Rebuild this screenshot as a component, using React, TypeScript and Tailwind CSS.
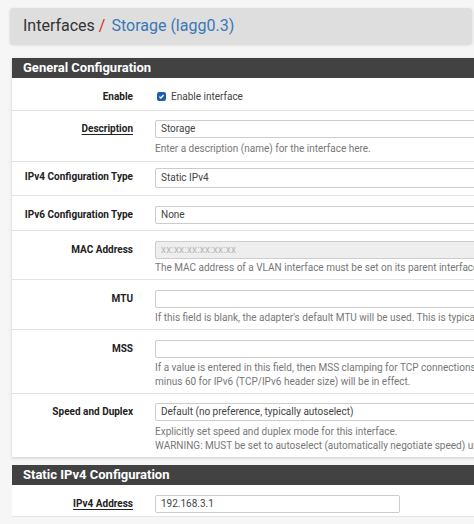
import React from 'react';

type RowProps = {
    label: string;
    underline?: boolean;
    pad: string;
    border?: boolean;
    children: React.ReactNode;
};

function Row({ label, underline, pad, border = true, children }: RowProps) {
    return (
        <div className={`flex ${border ? 'border-b border-[#e4e4e4]' : ''} ${pad}`}>
            <div className="w-[121px] shrink-0 text-right text-[10px] font-bold leading-[18px] text-[#222]">
                <span className={underline ? 'underline underline-offset-2' : ''}>{label}</span>
            </div>
            <div className="ml-[22px] flex-1">{children}</div>
        </div>
    );
}

function Input({ value, h = 'h-[18px]', disabled }: { value: string; h?: string; disabled?: boolean }) {
    return (
        <div
            className={`flex w-[520px] items-center rounded-[2px] border border-[#ccc] px-[5px] ${h} ${disabled ? 'bg-[#eee]' : 'bg-white'}`}
        >
            <span
                className={
                    disabled
                        ? 'text-[10px] leading-none tracking-[0.2px] text-[#b5b5b5]'
                        : 'text-[10px] leading-none text-[#444]'
                }
            >
                {value}
            </span>
        </div>
    );
}

function Help({ lines, mt = 'mt-[3px]' }: { lines: string[]; mt?: string }) {
    return (
        <div className={`${mt} whitespace-nowrap text-[10px] leading-[14px] text-[#777]`}>
            {lines.map((l) => (
                <div key={l}>{l}</div>
            ))}
        </div>
    );
}

function Heading({ title }: { title: string }) {
    return (
        <div className="flex h-[20px] items-center bg-[#424242] px-[11px] text-[13px] font-bold text-white">
            {title}
        </div>
    );
}

export default function App() {
    return (
        <div
            className="h-[524px] w-[474px] overflow-hidden bg-[#f6f6f6]"
            style={{ fontFamily: 'Roboto, "Liberation Sans", sans-serif' }}
        >
            <div className="w-[700px] pt-[8px]">
                <div className="ml-[10px] flex h-[36px] w-[462px] items-center rounded-[3px] bg-[#dedede] px-[13px] text-[16px] shadow-[0_1px_3px_rgba(0,0,0,0.15)]">
                    <span className="text-[#333]">Interfaces</span>
                    <span className="ml-[4px] text-[#c9302c]">/</span>
                    <span className="ml-[6px] text-[#3a78b5]">Storage (lagg0.3)</span>
                </div>

                <div className="ml-[12px] mt-[14px] w-[680px] bg-white shadow-[0_1px_3px_rgba(0,0,0,0.18)]">
                    <Heading title="General Configuration" />

                    <div className="flex h-[33px] items-center border-b border-[#e4e4e4] pt-[4px]">
                        <div className="w-[121px] text-right text-[10px] font-bold text-[#222]">Enable</div>
                        <div className="ml-[24px] flex items-center">
                            <span className="flex h-[9px] w-[9px] items-center justify-center rounded-[2px] bg-[#1f5fae]">
                                <svg viewBox="0 0 10 10" className="h-[7px] w-[7px]">
                                    <path d="M2 5.2 L4.1 7.2 L8 2.8" fill="none" stroke="white" strokeWidth="1.8" />
                                </svg>
                            </span>
                            <span className="ml-[5px] text-[10px] text-[#444]">Enable interface</span>
                        </div>
                    </div>

                    <Row label="Description" underline pad="pt-[9px] pb-[5px]">
                        <Input value="Storage" />
                        <Help mt="mt-[4px]" lines={['Enter a description (name) for the interface here.']} />
                    </Row>

                    <Row label="IPv4 Configuration Type" pad="pt-[6px] pb-[7px]">
                        <Input value="Static IPv4" h="h-[20px]" />
                    </Row>

                    <Row label="IPv6 Configuration Type" pad="pt-[10px] pb-[6px]">
                        <Input value="None" />
                    </Row>

                    <Row label="MAC Address" pad="pt-[10px] pb-[4px]">
                        <Input value="xx:xx:xx:xx:xx:xx" disabled />
                        <Help mt="mt-[2px]" lines={['The MAC address of a VLAN interface must be set on its parent interface']} />
                    </Row>

                    <Row label="MTU" pad="pt-[10px] pb-[4px]">
                        <Input value="" />
                        <Help
                            lines={[
                                "If this field is blank, the adapter's default MTU will be used. This is typically 1500 bytes",
                            ]}
                        />
                    </Row>

                    <Row label="MSS" pad="pt-[10px] pb-[4px]">
                        <Input value="" />
                        <Help
                            lines={[
                                'If a value is entered in this field, then MSS clamping for TCP connections to the value',
                                'minus 60 for IPv6 (TCP/IPv6 header size) will be in effect.',
                            ]}
                        />
                    </Row>

                    <Row label="Speed and Duplex" pad="pt-[9px] pb-[4px]" border={false}>
                        <Input value="Default (no preference, typically autoselect)" />
                        <Help
                            mt="mt-[4px]"
                            lines={[
                                'Explicitly set speed and duplex mode for this interface.',
                                'WARNING: MUST be set to autoselect (automatically negotiate speed) unless',
                            ]}
                        />
                    </Row>
                </div>

                <div className="ml-[12px] mt-[8px] w-[680px] bg-white">
                    <Heading title="Static IPv4 Configuration" />
                    <Row label="IPv4 Address" underline pad="pt-[10px] pb-[3px]">
                        <div className="flex h-[18px] w-[245px] items-center rounded-[2px] border border-[#ccc] px-[5px] text-[10px] leading-none text-[#444]">
                            192.168.3.1
                        </div>
                    </Row>
                </div>
            </div>
        </div>
    );
}
